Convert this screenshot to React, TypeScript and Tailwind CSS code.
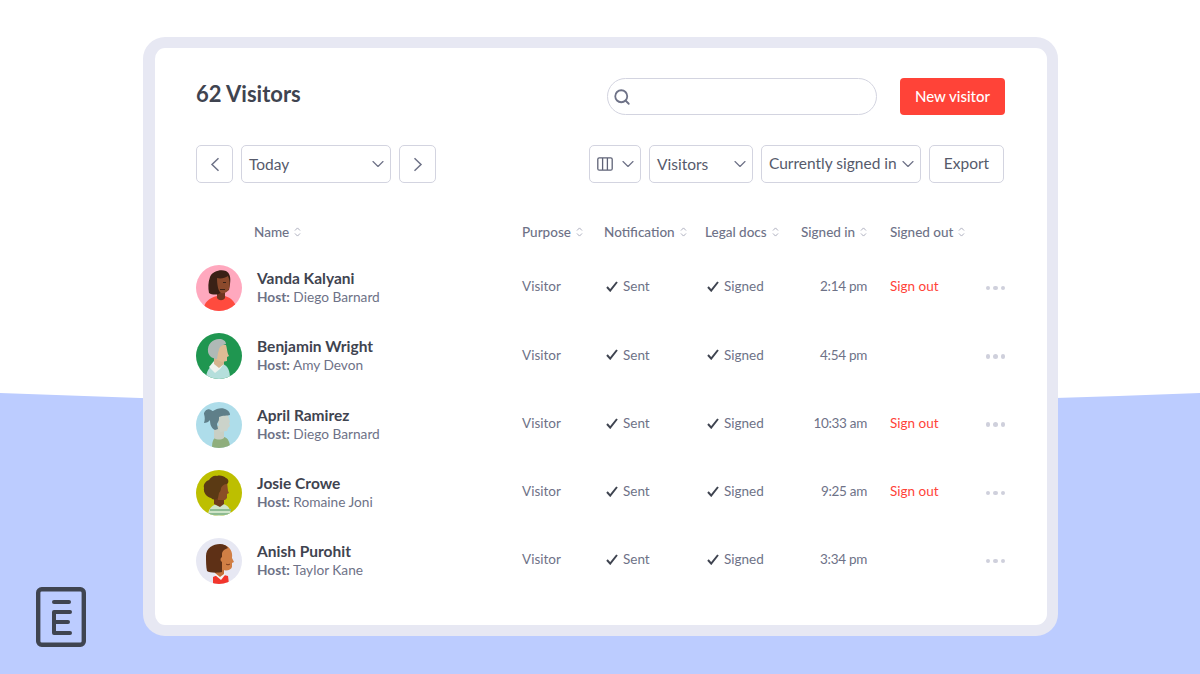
import { ChevronDown, Search } from 'lucide-react';
import type { ReactNode } from 'react';

const font = "font-['Lato','Open_Sans',sans-serif]";

function Avatar1() {
  return (
    <svg viewBox="0 0 46 46" className="size-[46px] shrink-0">
      <defs>
        <clipPath id="a1"><circle cx="23" cy="23" r="23" /></clipPath>
      </defs>
      <g clipPath="url(#a1)">
        <rect width="46" height="46" fill="#FFA8BE" />
        <path d="M7 46c1-9 6-13 14-15h8c7 2 11 7 12 15z" fill="#FF4B3E" />
        <path d="M21 24h8v9c-2 3-6 3-8 0z" fill="#6E3520" />
        <path d="M14 12c2-6 11-8 16-6 4 2 5 7 4 13l-1 6-9 3c-2 2-8 2-11 0-1-5-1-11 1-16z" fill="#3A2116" />
        <path d="M21 13c4 1 8 0 11-2 2 4 2 9 1 13-1 3-5 5-8 4-3-2-4-9-4-15z" fill="#8C4A2C" />
        <path d="M24 24h5v1h-5zM27 17h3v1h-3z" fill="#3A2116" />
      </g>
    </svg>
  );
}

function Avatar2() {
  return (
    <svg viewBox="0 0 46 46" className="size-[46px] shrink-0">
      <defs>
        <clipPath id="a2"><circle cx="23" cy="23" r="23" /></clipPath>
      </defs>
      <g clipPath="url(#a2)">
        <rect width="46" height="46" fill="#1F9650" />
        <path d="M10 46c0-8 4-13 9-15h8c5 2 7 7 7 15z" fill="#B5DFDC" />
        <path d="M13 34l5-6 10 3-4 5-5 4z" fill="#EEF3EE" />
        <path d="M18 22h10v9l-5 4-5-4z" fill="#D4B48E" />
        <path d="M18 12h12c1 3 1 6 2 9l1 2-2 1v4l-5 1-7-3z" fill="#DDBB94" />
        <path d="M12 19c-1-8 5-13 11-13 4 0 7 2 7 5-3 1-6 2-7 5 0 2-1 3-1 4l-1 6c-3 0-8-2-9-7z" fill="#AFB9B6" />
      </g>
    </svg>
  );
}

function Avatar3() {
  return (
    <svg viewBox="0 0 46 46" className="size-[46px] shrink-0">
      <defs>
        <clipPath id="a3"><circle cx="23" cy="23" r="23" /></clipPath>
      </defs>
      <g clipPath="url(#a3)">
        <rect width="46" height="46" fill="#AEDDEA" />
        <path d="M16 46c0-6 1-10 5-11h7c4 1 6 5 6 11z" fill="#8FAE7C" />
        <path d="M18 24h10v12c-3 2-7 2-10 0z" fill="#C9CFC4" />
        <path d="M20 10h11l3 10-1 1 1 3-2 2-1 3-7 1z" fill="#CBD3CA" />
        <path d="M8 12c0-3 4-6 7-4 1 1 2 1 2 1 4-3 10-4 14-1 2 1 3 3 3 5-3 1-7 0-11 2 0 2 0 4-1 5l-1 2 1 5-3 1c-4-2-5-6-5-10-1 2-4 3-6 3 1-3 1-6 0-9z" fill="#5F7F89" />
      </g>
    </svg>
  );
}

function Avatar4() {
  return (
    <svg viewBox="0 0 46 46" className="size-[46px] shrink-0">
      <defs>
        <clipPath id="a4"><circle cx="23" cy="23" r="23" /></clipPath>
      </defs>
      <g clipPath="url(#a4)">
        <rect width="46" height="46" fill="#BDBF00" />
        <path d="M12 46c0-7 4-11 9-12h6c5 1 8 5 8 12z" fill="#CFE4C8" />
        <path d="M14 39h21v2H14zM13 43h22v2H13z" fill="#8DBB91" />
        <path d="M18 22h10v12l-4 3-6-3z" fill="#6E3B1C" />
        <path d="M20 12h11l1 9 1 2-2 1v4l-2 2h-7z" fill="#8A4E26" />
        <path d="M8 18c-1-4 2-7 5-8 2-3 5-5 8-4 3-1 7 0 9 2 3 1 3 5 1 6-3 0-5 2-6 4 0 2-1 4-2 5l-1 5c-3 2-5 2-7 0-4-1-8-5-7-10z" fill="#5B3A14" />
      </g>
    </svg>
  );
}

function Avatar5() {
  return (
    <svg viewBox="0 0 46 46" className="size-[46px] shrink-0">
      <defs>
        <clipPath id="a5"><circle cx="23" cy="23" r="23" /></clipPath>
      </defs>
      <g clipPath="url(#a5)">
        <rect width="46" height="46" fill="#E7E8F3" />
        <path d="M17 46v-7l7-3 8 2 1 8z" fill="#F2352C" />
        <path d="M19 37l6 5 4-5-1-3h-8z" fill="#F6F6F6" />
        <path d="M19 27h9v9l-4 3-5-4z" fill="#C2703A" />
        <path d="M20 7h9c5 2 8 7 7 13l2 4-2 1v4c-1 3-5 4-9 3l-7-3z" fill="#D17F45" />
        <path d="M10 18c0-8 7-12 14-12 4 0 7 2 8 4-3 1-6 3-6 6v3c-2 1-2 4 0 5v10c-4 1-13 1-15-1-1-4-1-10-1-15z" fill="#5E3016" />
        <path d="M30 26c1 1 3 1 4 0" fill="none" stroke="#7A3A1C" strokeWidth="1" />
      </g>
    </svg>
  );
}

function Logo() {
  return (
    <svg viewBox="0 0 50 60" className="size-full" fill="none" stroke="#3F4450" strokeLinecap="round" strokeLinejoin="round">
      <rect x="2.2" y="2.2" width="45.6" height="55.6" rx="3.5" strokeWidth="4.4" />
      <path d="M18 15h15" strokeWidth="4" />
      <path d="M34 25H18v21h16M18 35h14" strokeWidth="4" />
    </svg>
  );
}

function Sort() {
  return (
    <svg viewBox="0 0 7 11" className="ml-[5px] h-[10px] w-[7px]" fill="none" stroke="#A6A8B8" strokeWidth="1" strokeLinecap="round" strokeLinejoin="round">
      <path d="M1 3.6 3.5 1 6 3.6M1 7.4 3.5 10 6 7.4" />
    </svg>
  );
}

function Tick() {
  return (
    <svg viewBox="0 0 12 11" className="ml-[2px] h-[11px] w-[12px] shrink-0" fill="none" stroke="#3F4450" strokeWidth="2">
      <path d="M1 6l3.2 3.6L11 1" />
    </svg>
  );
}

function Box({ className, children }: { className: string; children: ReactNode }) {
  return (
    <div className={`flex h-[38px] items-center rounded-[5px] border border-[#D3D4E0] bg-white text-[15.5px] text-[#565A6B] ${className}`}>
      {children}
    </div>
  );
}

const visitors = [
  { name: 'Vanda Kalyani', host: 'Diego Barnard', time: '2:14 pm', out: true, avatar: <Avatar1 /> },
  { name: 'Benjamin Wright', host: 'Amy Devon', time: '4:54 pm', out: false, avatar: <Avatar2 /> },
  { name: 'April Ramirez', host: 'Diego Barnard', time: '10:33 am', out: true, avatar: <Avatar3 /> },
  { name: 'Josie Crowe', host: 'Romaine Joni', time: '9:25 am', out: true, avatar: <Avatar4 /> },
  { name: 'Anish Purohit', host: 'Taylor Kane', time: '3:34 pm', out: false, avatar: <Avatar5 /> },
];

const gridCols = 'grid grid-cols-[326px_82px_101px_96px_89px_95px_20px]';

export default function App() {
  return (
    <div className={`relative h-[674px] w-[1200px] overflow-hidden bg-white ${font}`}>
      {/* blue band behind the card */}
      <svg viewBox="0 0 1200 281" className="absolute bottom-0 left-0 h-[281px] w-[1200px]">
        <path d="M0 0Q600 24 1200 0V281H0Z" fill="#BCCCFF" />
      </svg>

      <div className="absolute bottom-[27px] left-[36px] h-[60px] w-[50px]">
        <Logo />
      </div>

      <div className="relative ml-[143px] pt-[37px]">
        <div className="h-[599px] w-[915px] rounded-[22px] border-y-[11px] border-l-[12px] border-r-[11px] border-[#E7E8F3] bg-white pl-[41px] pt-[30px]">
          <div className="flex h-[37px] items-center">
            <h1 className="w-[411px] pb-[6px] text-[22px] font-bold leading-none text-[#3F4450]">62 Visitors</h1>
            <div className="flex h-[37px] w-[270px] items-center rounded-full border border-[#D3D4E0] pl-[5px]">
              <Search size={18} strokeWidth={2.4} className="text-[#6E7287]" />
            </div>
            <button className="ml-[23px] h-[37px] w-[105px] rounded-[4px] bg-[#FF4338] text-[15px] font-medium text-white">New visitor</button>
          </div>

          <div className="mt-[30px] flex h-[38px] items-center">
            <Box className="w-[37px] justify-center">
              <svg viewBox="0 0 10 15" className="h-[15px] w-[10px]" fill="none" stroke="#6E7287" strokeWidth="1.5">
                <path d="M8.5 1.2 2 7.5l6.5 6.3" />
              </svg>
            </Box>
            <Box className="ml-[8px] w-[150px] justify-between pl-[7px] pr-[2px] pt-[2px]">
              Today
              <ChevronDown size={20} strokeWidth={1.4} className="-mt-[2px] text-[#6E7287]" />
            </Box>
            <Box className="ml-[8px] w-[37px] justify-center">
              <svg viewBox="0 0 10 15" className="h-[15px] w-[10px]" fill="none" stroke="#6E7287" strokeWidth="1.5">
                <path d="M1.5 1.2 8 7.5l-6.5 6.3" />
              </svg>
            </Box>
            <Box className="ml-[153px] w-[52px] justify-between pl-[7px] pr-[2px]">
              <svg viewBox="0 0 16 14" className="h-[14px] w-[16px]" fill="none" stroke="#5F6377" strokeWidth="1.3">
                <rect x="0.8" y="0.8" width="14.4" height="12.4" rx="1.5" />
                <path d="M5.6 1v12M10.4 1v12" />
              </svg>
              <ChevronDown size={20} strokeWidth={1.4} className="text-[#6E7287]" />
            </Box>
            <Box className="ml-[8px] w-[104px] justify-between pl-[7px] pr-[2px] pt-[2px]">
              Visitors
              <ChevronDown size={20} strokeWidth={1.4} className="-mt-[2px] text-[#6E7287]" />
            </Box>
            <Box className="ml-[8px] w-[160px] justify-between whitespace-nowrap pl-[7px] pr-[2px]">
              Currently signed in
              <ChevronDown size={20} strokeWidth={1.4} className="shrink-0 text-[#6E7287]" />
            </Box>
            <Box className="ml-[8px] w-[75px] justify-center">Export</Box>
          </div>

          <div className={`${gridCols} mt-[39px] h-[18px] items-center whitespace-nowrap text-[13.5px] font-medium text-[#6E7287]`}>
            <div className="flex items-center pl-[58px]">Name<Sort /></div>
            <div className="flex items-center">Purpose<Sort /></div>
            <div className="flex items-center">Notification<Sort /></div>
            <div className="flex items-center">Legal docs<Sort /></div>
            <div className="flex items-center">Signed in<Sort /></div>
            <div className="flex items-center">Signed out<Sort /></div>
          </div>

          <div className="mt-[25px] flex flex-col gap-[22.25px]">
            {visitors.map((v) => (
              <div key={v.name} className={`${gridCols} h-[46px] items-center whitespace-nowrap text-[13.5px] text-[#6E7287]`}>
                <div className="flex items-center gap-[15px]">
                  {v.avatar}
                  <div className="-mt-[2px]">
                    <div className="text-[15.5px] font-bold leading-[20px] text-[#3F4450]">{v.name}</div>
                    <div className="text-[13.7px] leading-[18px]"><span className="font-bold">Host:</span> {v.host}</div>
                  </div>
                </div>
                <div className="-mt-[3px]">Visitor</div>
                <div className="-mt-[3px] flex items-center gap-[5px]">
                  <Tick />Sent
                </div>
                <div className="-mt-[3px] flex items-center gap-[5px]">
                  <Tick />Signed
                </div>
                <div className="-mt-[3px] w-[66px] text-right tracking-[-0.3px]">{v.time}</div>
                <div className="-mt-[3px] text-[#FF4338]">{v.out ? 'Sign out' : ''}</div>
                <div className="flex justify-end gap-[3px]">
                  <span className="size-[4.5px] rounded-full bg-[#CFD0DC]" />
                  <span className="size-[4.5px] rounded-full bg-[#CFD0DC]" />
                  <span className="size-[4.5px] rounded-full bg-[#CFD0DC]" />
                </div>
              </div>
            ))}
          </div>
        </div>
      </div>
    </div>
  );
}
